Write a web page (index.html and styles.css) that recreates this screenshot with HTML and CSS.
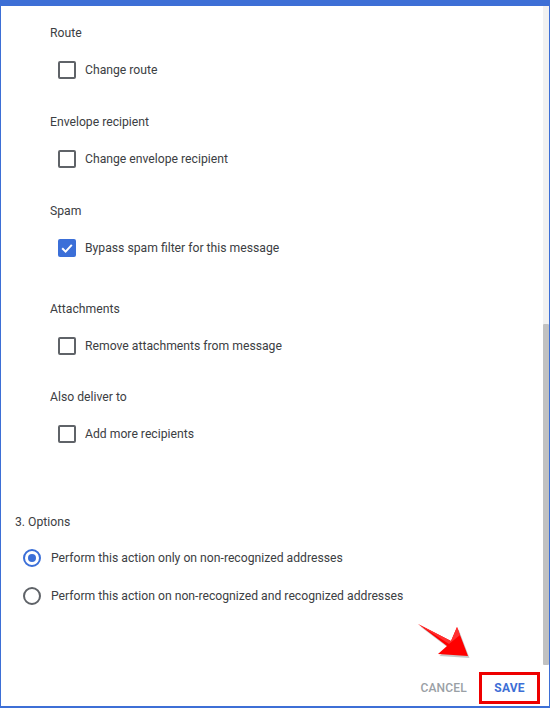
FILE: index.html
```html
<!DOCTYPE html>
<html>
<head>
<meta charset="utf-8">
<link rel="stylesheet" href="styles.css">
</head>
<body>
<div class="frame">
  <div class="content">
    <section class="group">
      <div class="heading">Route</div>
      <label class="row"><span class="box"></span><span>Change route</span></label>
    </section>
    <section class="group">
      <div class="heading">Envelope recipient</div>
      <label class="row"><span class="box"></span><span>Change envelope recipient</span></label>
    </section>
    <section class="group group-wide">
      <div class="heading">Spam</div>
      <label class="row"><span class="box checked"><svg viewBox="0 0 18 18" width="18" height="18"><path d="M4.2 9.3 L7.6 12.6 L13.8 5.9" fill="none" stroke="#fff" stroke-width="2"/></svg></span><span>Bypass spam filter for this message</span></label>
    </section>
    <section class="group group-last">
      <div class="heading">Attachments</div>
      <label class="row"><span class="box"></span><span>Remove attachments from message</span></label>
    </section>
    <section class="group">
      <div class="heading">Also deliver to</div>
      <label class="row"><span class="box"></span><span>Add more recipients</span></label>
    </section>

    <section class="options">
      <div class="options-title">3. Options</div>
      <label class="radio-row"><span class="radio on"></span><span>Perform this action only on non-recognized addresses</span></label>
      <label class="radio-row"><span class="radio"></span><span>Perform this action on non-recognized and recognized addresses</span></label>
    </section>

    <div class="footer">
      <button class="btn cancel">CANCEL</button>
      <button class="btn save">SAVE</button>
    </div>
  </div>
  <div class="scrollbar"><div class="track"></div><div class="thumb"></div></div>

  <svg class="arrow" viewBox="0 0 60 45" width="60" height="45">
    <polygon points="2,5 35,22 41,8 52,37 22,35 31,27" fill="#9a9a9a" opacity="0.55" transform="translate(1.5,2)"/>
    <polygon points="2,5 35,22 41,8 52,37 22,35 31,27" fill="#ff0000"/>
    <polygon points="2,5 35,22 41,8 44,16 33,25" fill="#ff3030"/>
  </svg>
</div>
</body>
</html>
```
FILE: styles.css
```css
* { box-sizing: border-box; }
html, body { margin: 0; padding: 0; }
body {
  width: 550px;
  height: 708px;
  font-family: Roboto, "Liberation Sans", Arial, sans-serif;
  font-size: 12.2px;
  color: #3c4043;
  background: #fff;
}
.frame {
  position: relative;
  width: 550px;
  height: 708px;
  border-top: 6px solid #3d6fd6;
  border-left: 1px solid #3d6fd6;
  border-right: 1px solid #3d6fd6;
  border-bottom: 2px solid #3d6fd6;
  display: flex;
  background: #fff;
}
.content {
  flex: 1;
  display: flex;
  flex-direction: column;
  padding: 17px 0 0 49px;
}
.group { margin-bottom: 32px; }
.group-wide { margin-bottom: 41px; }
.group-last { margin-bottom: 31px; }
.heading { line-height: 20px; height: 20px; }
.row {
  display: flex;
  align-items: center;
  height: 20px;
  margin-top: 17px;
  padding-left: 8px;
  gap: 9px;
}
.box {
  width: 18px;
  height: 18px;
  border: 2px solid #5f6368;
  border-radius: 2px;
  flex: none;
  display: flex;
}
.box.checked {
  background: #3b6fd8;
  border: none;
}
.options {
  margin-top: 36px;
  margin-left: -35px;
}
.options-title { line-height: 20px; height: 20px; }
.radio-row {
  display: flex;
  align-items: center;
  height: 38px;
  padding-left: 8px;
  gap: 10px;
}
.options-title + .radio-row { margin-top: 7px; }
.radio {
  width: 18px;
  height: 18px;
  border: 2px solid #5f6368;
  border-radius: 50%;
  flex: none;
  display: flex;
  align-items: center;
  justify-content: center;
}
.radio.on { border-color: #3b6fd8; }
.radio.on::after {
  content: "";
  width: 8px;
  height: 8px;
  border-radius: 50%;
  background: #3b6fd8;
}
.footer {
  margin-top: auto;
  margin-bottom: 2px;
  display: flex;
  justify-content: flex-end;
  align-items: center;
  gap: 12px;
  padding-right: 3px;
}
.btn {
  font-family: Roboto, "Liberation Sans", Arial, sans-serif;
  font-size: 12px;
  font-weight: 500;
  background: none;
  border: none;
  padding: 0;
  letter-spacing: 0.2px;
}
.cancel { color: #9aa0a6; }
.save {
  color: #3d6fd6;
  font-weight: 700;
  width: 61px;
  height: 32px;
  border: 3px solid #ee0000;
}
.scrollbar {
  width: 6px;
  display: flex;
  flex-direction: column;
}
.track { height: 318px; background: #f1f1f1; }
.thumb { height: 341px; background: #c1c1c1; border-radius: 1px; }
.arrow {
  position: absolute;
  left: 415px;
  top: 613px;
}
```
